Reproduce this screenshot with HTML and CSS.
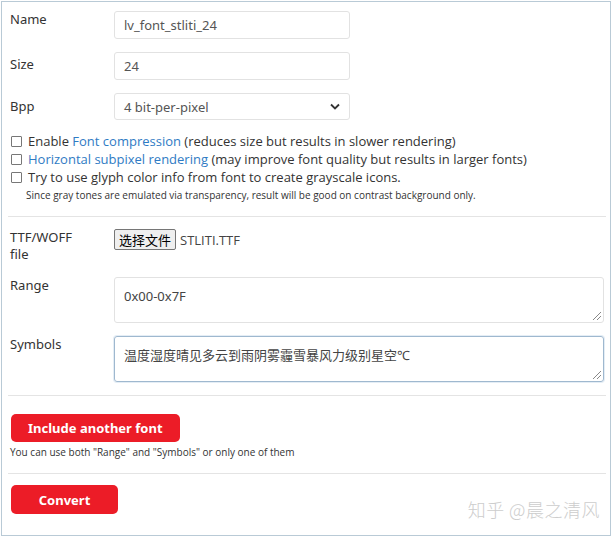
FILE: index.html
```html
<!DOCTYPE html>
<html>
<head>
    <link rel="stylesheet" href="styles.css">
</head>
<body>
    <div class="panel">
        <div class="row">
            <label class="label">Name</label>
            <input type="text" class="field short" value="lv_font_stliti_24">
        </div>
        <div class="row">
            <label class="label mid">Size</label>
            <input type="text" class="field short" value="24">
        </div>
        <div class="row">
            <label class="label low">Bpp</label>
            <div class="select short">
                <span>4 bit-per-pixel</span>
                <svg width="10" height="7" viewBox="0 0 10 7"><path d="M1 1.5 L5 5.5 L9 1.5" fill="none" stroke="#333" stroke-width="1.8"/></svg>
            </div>
        </div>

        <div class="checks">
            <div class="check"><span class="box"></span><span>Enable <a href="#">Font compression</a> (reduces size but results in slower rendering)</span></div>
            <div class="check"><span class="box"></span><span><a href="#">Horizontal subpixel rendering</a> (may improve font quality but results in larger fonts)</span></div>
            <div class="check"><span class="box"></span><span>Try to use glyph color info from font to create grayscale icons.</span></div>
            <div class="hint">Since gray tones are emulated via transparency, result will be good on contrast background only.</div>
        </div>

        <hr>

        <div class="row file-row">
            <label class="label">TTF/WOFF<br>file</label>
            <div class="file">
                <span class="file-btn">选择文件</span>
                <span class="file-name">STLITI.TTF</span>
            </div>
        </div>
        <div class="row">
            <label class="label">Range</label>
            <div class="area">0x00-0x7F<span class="grip"></span></div>
        </div>
        <div class="row">
            <label class="label">Symbols</label>
            <div class="area focus">温度湿度晴见多云到雨阴雾霾雪暴风力级别星空℃<span class="grip"></span></div>
        </div>

        <hr class="mid-rule">

        <button class="btn">Include another font</button>
        <div class="note">You can use both "Range" and "Symbols" or only one of them</div>

        <hr class="last">

        <button class="btn convert">Convert</button>

        <div class="watermark">知乎 @晨之清风</div>
    </div>
</body>
</html>
```

FILE: styles.css
```css
body {
    margin: 0;
    background: #fff;
    font-family: "Open Sans", "Noto Sans CJK SC", sans-serif;
    color: #222;
}

.panel {
    position: relative;
    margin: 1px 4px 0 1px;
    height: 535px;
    box-sizing: border-box;
    border: 1px solid #b9cad6;
    padding: 9px 6px 0 8px;
}

.row {
    display: flex;
    align-items: flex-start;
    margin-bottom: 13px;
}

.label {
    width: 104px;
    flex: none;
    font-family: "Noto Sans", sans-serif;
    font-size: 13px;
    line-height: 17px;
    color: #333;
}

.label.mid {
    padding-top: 4px;
}

.label.low {
    padding-top: 5px;
}

.field {
    box-sizing: border-box;
    height: 28px;
    border: 1px solid #e2e2e2;
    border-radius: 3px;
    padding: 0 9px;
    font-family: "Noto Sans", sans-serif;
    font-size: 13px;
    color: #555;
    outline: none;
}

.short {
    width: 236px;
}

.select {
    box-sizing: border-box;
    height: 27px;
    border: 1px solid #e2e2e2;
    border-radius: 3px;
    padding: 0 9px;
    display: flex;
    align-items: center;
    justify-content: space-between;
    font-family: "Noto Sans", sans-serif;
    font-size: 13px;
    color: #555;
}

.checks {
    margin-top: -1px;
    font-size: 13px;
    line-height: 18px;
    color: #333;
}

.check {
    display: flex;
    align-items: center;
    white-space: nowrap;
}

.check a {
    color: #2f7bc4;
    text-decoration: none;
}

.box {
    width: 9px;
    height: 9px;
    border: 1px solid #777;
    border-radius: 1px;
    margin: 0 6px 0 1px;
    flex: none;
}

.hint {
    font-size: 10px;
    line-height: 14px;
    color: #333;
    margin: 2px 0 0 16px;
}

hr {
    border: 0;
    border-top: 1px solid #e4e4e4;
    margin: 14px -2px 12px;
}

.file {
    display: flex;
    align-items: center;
    font-size: 13px;
    line-height: 16px;
}

.file-btn {
    box-sizing: border-box;
    height: 21px;
    padding: 0 4px;
    border: 1px solid #767676;
    border-radius: 2px;
    background: #efefef;
    font-family: "Noto Sans CJK SC", sans-serif;
    font-size: 13px;
    line-height: 19px;
    color: #000;
}

.file-name {
    margin-left: 4px;
    color: #444;
}

.file-row {
    margin-bottom: 14px;
}

.area {
    position: relative;
    box-sizing: border-box;
    width: 492px;
    height: 46px;
    border: 1px solid #e2e2e2;
    border-radius: 3px;
    padding: 10px 9px;
    font-family: "Noto Sans", "Noto Sans CJK SC", sans-serif;
    font-size: 13px;
    line-height: 16px;
    color: #444;
}

.area.focus {
    border-color: #9fb8cf;
    box-shadow: 0 0 0 1px #e4edf5;
}

.grip {
    position: absolute;
    right: 2px;
    bottom: 2px;
    width: 8px;
    height: 8px;
    background: linear-gradient(135deg, transparent 45%, #888 45%, #888 55%, transparent 55%, transparent 70%, #888 70%, #888 80%, transparent 80%);
}

hr.mid-rule {
    margin-top: 1px;
    margin-bottom: 18px;
}

.btn {
    display: block;
    box-sizing: border-box;
    height: 28px;
    padding: 0 17px;
    border: 0;
    border-radius: 5px;
    background: #ec1c27;
    color: #fff;
    font-family: "Noto Sans", sans-serif;
    font-size: 13px;
    font-weight: bold;
    margin: 0 0 0 1px;
}

.convert {
    width: 107px;
    height: 29px;
}

.note {
    font-size: 10px;
    line-height: 14px;
    color: #333;
    margin-top: 3px;
}

hr.last {
    margin: 14px -2px 11px;
}

.watermark {
    position: absolute;
    right: 10px;
    bottom: 13px;
    font-family: "Noto Sans CJK SC", sans-serif;
    font-size: 18px;
    font-weight: 300;
    color: #cdcdcd;
    letter-spacing: 0.5px;
}
```
